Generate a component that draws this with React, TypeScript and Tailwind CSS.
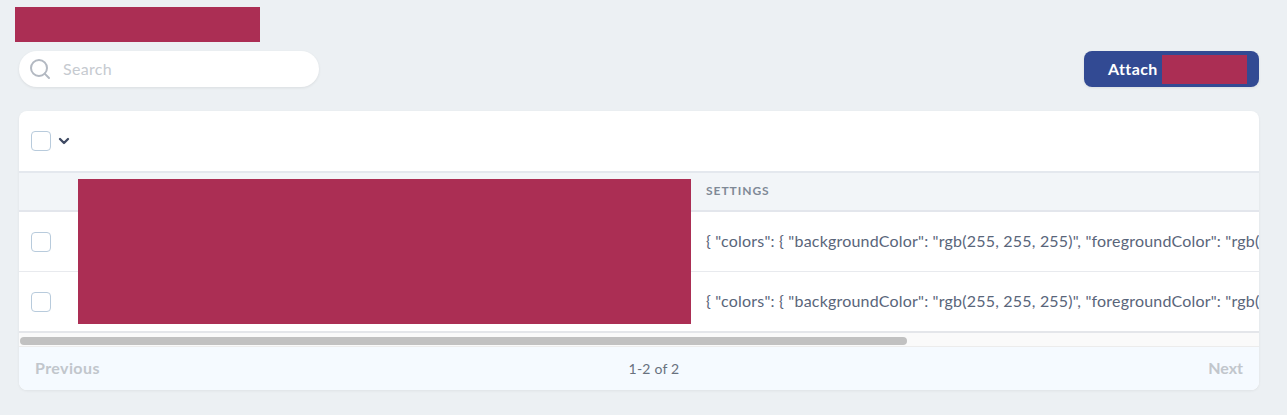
import { Search, ChevronDown } from "lucide-react";

const settingsText =
  '{ "colors": { "backgroundColor": "rgb(255, 255, 255)", "foregroundColor": "rgb(0, 0, 0)" } }';

function Checkbox() {
  return <div className="h-5 w-5 shrink-0 rounded-[4px] border border-[#b8cbdc] bg-white" />;
}

function Row({ className }: { className: string }) {
  return (
    <div className={`flex items-center ${className}`}>
      <div className="flex w-[59px] shrink-0 justify-start pl-3">
        <Checkbox />
      </div>
      <div className="w-[613px] shrink-0" />
      <div className="whitespace-nowrap pb-px pl-[15px] text-[16px] tracking-[0.2px] text-[#59657a]">
        {settingsText}
      </div>
    </div>
  );
}

export default function App() {
  return (
    <div className="h-[415px] w-[1287px] overflow-hidden bg-[#ecf0f3] font-['Lato','Noto_Sans',sans-serif]">
      <div className="ml-[15px] h-[42px] pt-[7px]">
        <div className="h-[35px] w-[245px] bg-[#ab2e54]" />
      </div>

      <div className="mx-[28px] ml-[19px] mt-[9px] flex items-center justify-between">
        <div className="flex h-9 w-[300px] items-center rounded-full bg-white pl-[9px] shadow-[0_1px_3px_rgba(0,0,0,0.08)]">
          <Search size={24} strokeWidth={2} className="text-[#b3b9c2]" />
          <span className="ml-[11px] text-[16px] leading-5 tracking-[0.3px] text-[#c6cad0]">Search</span>
        </div>
        <div className="flex h-9 w-[175px] items-center rounded-lg bg-[#324a93] pl-6 shadow-[0_1px_3px_rgba(0,0,0,0.08)]">
          <span className="w-[54px] shrink-0 text-[16px] font-bold tracking-[0.4px] text-white">Attach</span>
          <div className="h-[29px] w-[85px] bg-[#ab2e54]" />
        </div>
      </div>

      <div className="relative ml-[19px] mt-[24px] w-[1240px] overflow-hidden rounded-lg bg-white shadow-[0_1px_3px_rgba(0,0,0,0.06)]">
        <div className="flex h-[60px] items-center gap-[5px] pl-3">
          <Checkbox />
          <ChevronDown size={16} strokeWidth={3.5} className="text-[#3f4a63]" />
        </div>

        <div className="flex h-[41px] items-center border-y-2 border-t-[#e4e8ee] border-b-[#e3e6ec] bg-[#f2f5f8] pb-px pl-[687px]">
          <span className="text-[12px] font-bold tracking-[0.08em] text-[#7f8996]">SETTINGS</span>
        </div>

        <Row className="h-[60px] border-b border-[#e8eaee]" />
        <Row className="h-[61px] border-b-2 border-[#e4e6ea]" />

        <div className="flex h-[14px] items-end border-b border-[#ececec] bg-[#fafafa] pb-px pl-px">
          <div className="h-2 w-[887px] rounded-full bg-[#c1c1c1]" />
        </div>

        <div className="flex h-[43px] items-center justify-between bg-[#f5faff] px-4 pb-px">
          <span className="text-[16px] font-bold tracking-[0.4px] text-[#c1c6cc]">Previous</span>
          <span className="text-[14px] tracking-[0.2px] text-[#68717e]">1-2 of 2</span>
          <span className="text-[16px] font-bold text-[#c1c6cc]">Next</span>
        </div>

        <div className="absolute left-[59px] top-[68px] h-[145px] w-[613px] bg-[#ab2e54]" />
      </div>
    </div>
  );
}
